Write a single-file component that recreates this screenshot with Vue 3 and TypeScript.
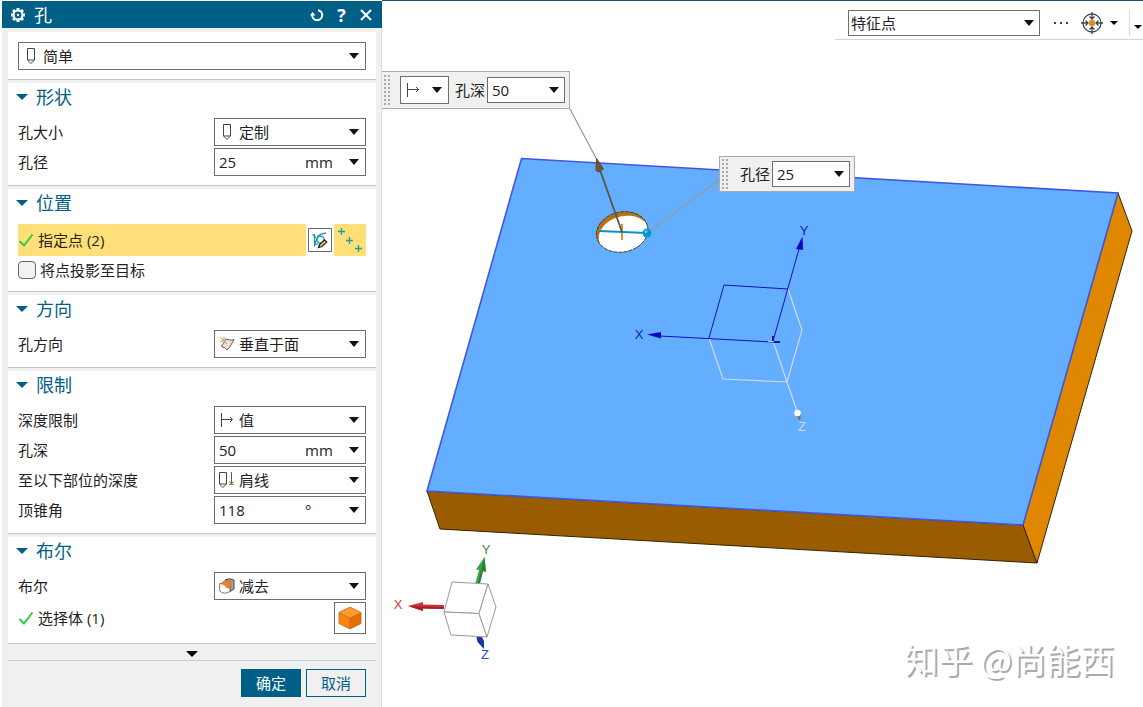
<script setup lang="ts">
import { ref } from 'vue'

const holeType = ref('简单')
const holeSize = ref('定制')
const diameter = ref('25')
const depth = ref('50')
const tipAngle = ref('118')
const direction = ref('垂直于面')
const depthLimit = ref('值')
const depthTo = ref('肩线')
const booleanOp = ref('减去')
const snapFilter = ref('特征点')
const project = ref(false)
</script>

<template>
  <div class="app">
    <aside class="dialog">
      <header class="titlebar">
        <svg class="gear" width="16" height="16" viewBox="0 0 16 16">
          <g fill="#fff">
            <rect v-for="a in 4" :key="a" x="6.5" y="1" width="3" height="14" :transform="`rotate(${a * 45} 8 8)`" />
            <circle cx="8" cy="8" r="5.5" />
          </g>
          <circle cx="8" cy="8" r="3.4" fill="#005f87" />
          <circle cx="8" cy="8" r="1.2" fill="#fff" />
        </svg>
        <h1>孔</h1>
        <button class="tool" aria-label="重置">
          <svg width="16" height="16" viewBox="0 0 16 16" fill="none" stroke="#fff" stroke-width="2">
            <path d="M9 3.2A5 5 0 1 1 3.2 8" /><path d="M1 8.5 3.5 5 6.5 8.5Z" fill="#fff" stroke="none" />
          </svg>
        </button>
        <button class="tool help" aria-label="帮助">?</button>
        <button class="tool" aria-label="关闭">
          <svg width="16" height="16" viewBox="0 0 16 16" stroke="#fff" stroke-width="2"><path d="M3 3 13 13M13 3 3 13" /></svg>
        </button>
      </header>

      <div class="body">
        <section class="panel first">
          <div class="combo wide">
            <svg class="ico" width="16" height="16" viewBox="0 0 16 16" fill="none" stroke="#444"><path d="M4.5 .5h7v11.500l-3.500 3.500-3.500-3.500zM5 12h6" /></svg>
            <select v-model="holeType" aria-label="孔类型"><option>简单</option></select>
            <svg class="caret" width="10" height="6" viewBox="0 0 10 6"><path d="M0 0h10L5 6z" /></svg>
          </div>
        </section>

        <section class="panel">
          <h2><svg class="fold" width="12" height="6" viewBox="0 0 12 6"><path d="M0 0h12L6 6z" /></svg>形状</h2>
          <div class="row">
            <label for="size">孔大小</label>
            <div class="combo">
              <svg class="ico" width="16" height="16" viewBox="0 0 16 16" fill="none" stroke="#444"><path d="M4.500 .500h7v11.500l-3.500 3.500-3.500-3.500zM5 12h6" /></svg>
              <select id="size" v-model="holeSize"><option>定制</option></select>
              <svg class="caret" width="10" height="6" viewBox="0 0 10 6"><path d="M0 0h10L5 6z" /></svg>
            </div>
          </div>
          <div class="row">
            <label for="dia">孔径</label>
            <div class="combo num">
              <input id="dia" v-model="diameter" type="text" />
              <select aria-label="孔径单位"><option>mm</option></select>
              <svg class="caret" width="10" height="6" viewBox="0 0 10 6"><path d="M0 0h10L5 6z" /></svg>
            </div>
          </div>
        </section>

        <section class="panel">
          <h2><svg class="fold" width="12" height="6" viewBox="0 0 12 6"><path d="M0 0h12L6 6z" /></svg>位置</h2>
          <div class="row pick">
            <button class="selection active">
              <svg width="16" height="16" viewBox="0 0 16 16" fill="none" stroke="#35c845" stroke-width="2"><path d="M1.500 9 6 13.500 14.500 2.500" /></svg>
              指定点 (2)
            </button>
            <button class="sketch" aria-label="绘制截面">
              <svg width="20" height="20" viewBox="0 0 20 20" fill="none">
                <path d="M4.500 4v12.500M2.500 4.500 6 8M4.500 15 8 6 11 4 16 3M4.500 15l4-1.500" stroke="#2196b4" stroke-width="1.300" />
                <circle cx="10.500" cy="9.500" r="3.500" stroke="#2196b4" stroke-width="1.300" />
                <path d="M8.500 17.500 9.700 14.500 14.500 10 16.700 12 12 16.500Z" fill="#f0d080" stroke="#222" stroke-width="1.300" />
              </svg>
            </button>
            <button class="points" aria-label="点">
              <svg width="32" height="32" viewBox="0 0 32 32" stroke="#1e9c96" stroke-width="1.300"><path d="M4 7.500h7M7.500 4v7M12 16.500h7M15.500 13v7M21 24.500h7M24.500 21v7" /></svg>
            </button>
          </div>
          <div class="row check">
            <input id="project" v-model="project" type="checkbox" />
            <label for="project">将点投影至目标</label>
          </div>
        </section>

        <section class="panel">
          <h2><svg class="fold" width="12" height="6" viewBox="0 0 12 6"><path d="M0 0h12L6 6z" /></svg>方向</h2>
          <div class="row">
            <label for="dir">孔方向</label>
            <div class="combo">
              <svg class="ico" width="16" height="16" viewBox="0 0 16 16" fill="none">
                <path d="M2.500 10.500 7 3Q11 5 15 3.500L10.500 11.500Q9 12 8 14Q6 11 2.500 10.500Z" fill="#eee3da" stroke="#66605c" />
                <path d="M8 8 1.500 1.500M1 6 5 4.500 5 1" stroke="#dc8a3a" />
              </svg>
              <select id="dir" v-model="direction"><option>垂直于面</option></select>
              <svg class="caret" width="10" height="6" viewBox="0 0 10 6"><path d="M0 0h10L5 6z" /></svg>
            </div>
          </div>
        </section>

        <section class="panel">
          <h2><svg class="fold" width="12" height="6" viewBox="0 0 12 6"><path d="M0 0h12L6 6z" /></svg>限制</h2>
          <div class="row">
            <label for="limit">深度限制</label>
            <div class="combo">
              <svg class="ico" width="16" height="16" viewBox="0 0 16 16" fill="none" stroke="#444"><path d="M2.500 1v14M3 7.500h10.500M11 5l2.500 2.500L11 10" /></svg>
              <select id="limit" v-model="depthLimit"><option>值</option></select>
              <svg class="caret" width="10" height="6" viewBox="0 0 10 6"><path d="M0 0h10L5 6z" /></svg>
            </div>
          </div>
          <div class="row">
            <label for="depth">孔深</label>
            <div class="combo num">
              <input id="depth" v-model="depth" type="text" />
              <select aria-label="孔深单位"><option>mm</option></select>
              <svg class="caret" width="10" height="6" viewBox="0 0 10 6"><path d="M0 0h10L5 6z" /></svg>
            </div>
          </div>
          <div class="row">
            <label for="depthto">至以下部位的深度</label>
            <div class="combo">
              <svg class="ico" width="16" height="16" viewBox="0 0 16 16" fill="none" stroke="#444"><path d="M.500 .500h7v11.500l-3.500 3.500-3.500-3.500zM1 12h6" /><path d="M12.500 0v12M10.500 9.500l2 2.500 2-2.500" stroke="#6d5a45" /><path d="M10 12.500h5" stroke="#d8843a" /></svg>
              <select id="depthto" v-model="depthTo"><option>肩线</option></select>
              <svg class="caret" width="10" height="6" viewBox="0 0 10 6"><path d="M0 0h10L5 6z" /></svg>
            </div>
          </div>
          <div class="row">
            <label for="angle">顶锥角</label>
            <div class="combo num">
              <input id="angle" v-model="tipAngle" type="text" />
              <select aria-label="角度单位"><option>°</option></select>
              <svg class="caret" width="10" height="6" viewBox="0 0 10 6"><path d="M0 0h10L5 6z" /></svg>
            </div>
          </div>
        </section>

        <section class="panel">
          <h2><svg class="fold" width="12" height="6" viewBox="0 0 12 6"><path d="M0 0h12L6 6z" /></svg>布尔</h2>
          <div class="row">
            <label for="bool">布尔</label>
            <div class="combo">
              <svg class="ico" width="16" height="16" viewBox="0 0 16 16">
                <path d="M6 2Q10-.500 15 2V11L11 13.500V6Z" fill="#a5a5a5" stroke="#444" />
                <path d="M.700 5.500v7.500Q5 17 11 13.500V6Z" fill="#fff" stroke="#777" />
                <path d="M3 4.500Q7 .500 12 3.500V9Q10 11 7.500 9.500Q6.500 6.500 3 6Z" fill="#e8833a" stroke="#b8602a" stroke-width=".600" />
              </svg>
              <select id="bool" v-model="booleanOp"><option>减去</option></select>
              <svg class="caret" width="10" height="6" viewBox="0 0 10 6"><path d="M0 0h10L5 6z" /></svg>
            </div>
          </div>
          <div class="row pick">
            <button class="selection">
              <svg width="16" height="16" viewBox="0 0 16 16" fill="none" stroke="#35c845" stroke-width="2"><path d="M1.500 9 6 13.500 14.500 2.500" /></svg>
              选择体 (1)
            </button>
            <button class="solid" aria-label="体">
              <svg width="24" height="24" viewBox="0 0 24 24">
                <path d="M12 1 23 6.500 12 12 1 6.500Z" fill="#ff9c2b" />
                <path d="M1 6.500 12 12V23L1 17.500Z" fill="#fb8410" />
                <path d="M23 6.500 12 12V23L23 17.500Z" fill="#e36f08" />
                <path d="M12 1 23 6.500V17.500L12 23 1 17.500V6.500ZM1 6.500 12 12 23 6.500M12 12v11" fill="none" stroke="#c96412" stroke-width=".800" />
              </svg>
            </button>
          </div>
        </section>

        <button class="expand" aria-label="展开">
          <svg width="12" height="6" viewBox="0 0 12 6"><path d="M0 0h12L6 6z" /></svg>
        </button>
      </div>

      <footer class="actions">
        <button class="primary">确定</button>
        <button>取消</button>
      </footer>
    </aside>

    <main class="viewport">
      <svg class="scene" viewBox="382 0 761 707" preserveAspectRatio="xMinYMin meet">
        <defs>
          <clipPath id="holeClip"><ellipse cx="622.200" cy="232" rx="26" ry="20" transform="rotate(-12 622.200 232)" /></clipPath>
        </defs>
        <g stroke="#332200" stroke-width="1">
          <path d="M427 491 1023 525 1037 563 440 529Z" fill="#995c00" />
          <path d="M1118 193 1132 231 1037 563 1023 525Z" fill="#e08700" />
        </g>
        <path d="M521.500 158.500 1118 193 1023 525 427 491Z" fill="#63aeff" stroke="#4257dd" stroke-width="1.600" />

        <g clip-path="url(#holeClip)">
          <path d="M590 205h65v55h-65z" fill="#b87210" />
          <ellipse cx="624.500" cy="236" rx="26" ry="20" fill="#fff" transform="rotate(-12 624.500 236)" />
        </g>
        <ellipse cx="622.200" cy="232" rx="26" ry="20" fill="none" stroke="#333" stroke-width=".900" stroke-dasharray="4 1" transform="rotate(-12 622.200 232)" />
        <path d="M570 109 597 160M647 233 719 180" stroke="#999" stroke-width="1.200" />
        <path d="M622 224v16" stroke="#dc9030" stroke-width="2" />
        <path d="M599 231 647 233" stroke="#0b8fc4" stroke-width="2" />
        <path d="M622 232 600 170" stroke="#5e5245" stroke-width="1.800" />
        <path d="M596.500 158.500 603.500 169 599 172 596 170.500Z" fill="#705439" stroke="#5e4930" />
        <circle cx="647" cy="233" r="4.500" fill="#0796d1" />
        <circle cx="646" cy="231.500" r="1.500" fill="#55c8f2" />

        <g fill="none" stroke="#d3d8e0" stroke-width="1.200">
          <path d="M788 289 802 330 787 382 723 379 709 338M773 341 787 382 797 411" />
        </g>
        <g fill="none" stroke="#1111bb" stroke-width="1">
          <path d="M709 338 724 285 788 289M773 341 799 249M772 342 660 336" />
          <path d="M773 336v6M773 342h7" stroke-width="2" />
        </g>
        <path d="M768 341.500h6" stroke="#c9b9f5" />
        <path d="M802.500 236.500 803 250 796 249ZM647 334.500 661 332 661 338.500Z" fill="#0909c4" />
        <path d="M795 414h6l-1 7z" fill="#777" />
        <circle cx="797.500" cy="413" r="3.300" fill="#fff" />
        <g class="axis" text-anchor="middle">
          <text x="639" y="339" fill="#1717b8">X</text>
          <text x="804" y="235" fill="#1717b8">Y</text>
          <text x="802" y="431" fill="#d3d8e0">Z</text>
          <text x="398" y="609" fill="#c43c42">X</text>
          <text x="486" y="554" fill="#3c8a45">Y</text>
          <text x="485" y="659" fill="#2c50c8">Z</text>
        </g>

        <path d="M444 605 423 604.500V602L408 606 423 611V608.500L444 609Z" fill="#cd3339" />
        <path d="M408 606 423 611V608.500L444 609V607Z" fill="#a32228" />
        <path d="M475.500 583 479 570 476 569.500 484.500 557 486 572 483 571 480 583Z" fill="#38a646" />
        <path d="M480 583 483 571 486 572 484.500 557 481 571 478 583Z" fill="#278035" />
        <path d="M476.500 637H482L484 641V649L477.500 642Z" fill="#17389d" />
        <g fill="#fff" stroke="#999" stroke-width="1">
          <path d="M452 582 488 584 479 613.500 444 612Z" />
          <path d="M444 612 479 613.500 487 637 451 635Z" />
          <path d="M488 584 496 607 487 637 479 613.500Z" />
        </g>
      </svg>

      <div class="topbar">
        <div class="combo filter">
          <select v-model="snapFilter" aria-label="选择过滤器"><option>特征点</option></select>
          <svg class="caret" width="10" height="6" viewBox="0 0 10 6"><path d="M0 0h10L5 6z" /></svg>
        </div>
        <button aria-label="更多"><svg width="16" height="4" viewBox="0 0 16 4"><path d="M1 1h2v2H1zM7 1h2v2H7zM13 1h2v2h-2z" fill="#444" /></svg></button>
        <button class="target" aria-label="捕捉点">
          <svg width="24" height="24" viewBox="0 0 24 24" fill="none" stroke="#3c4a50" stroke-width="1.300">
            <circle cx="12" cy="12" r="9" />
            <path d="M12 1v7M12 23v-7M1 12h7M23 12h-7M9.500 5.500 12 8l2.500-2.500M9.500 18.500 12 16l2.500 2.500M5.500 9.500 8 12l-2.500 2.500M18.500 9.500 16 12l2.500 2.500" />
            <circle cx="12" cy="12" r="3.200" fill="#e88a1c" stroke="none" />
          </svg>
          <svg width="8" height="4" viewBox="0 0 8 4"><path d="M0 0h8L4 4z" /></svg>
        </button>
        <button class="overflow" aria-label="工具条选项"><svg width="8" height="4" viewBox="0 0 8 4"><path d="M0 0h8L4 4z" /></svg></button>
      </div>

      <div class="floatbar depthbar">
        <i class="grip"></i>
        <div class="combo mode">
          <svg class="ico" width="16" height="16" viewBox="0 0 16 16" fill="none" stroke="#444"><path d="M2.500 1v14M3 7.500h10.500M11 5l2.500 2.500L11 10" /></svg>
          <select aria-label="深度限制方式"><option label=" ">值</option></select>
          <svg class="caret" width="10" height="6" viewBox="0 0 10 6"><path d="M0 0h10L5 6z" /></svg>
        </div>
        <label for="fdepth">孔深</label>
        <div class="combo value">
          <input id="fdepth" v-model="depth" type="text" />
          <svg class="caret" width="10" height="6" viewBox="0 0 10 6"><path d="M0 0h10L5 6z" /></svg>
        </div>
      </div>

      <div class="floatbar diabar">
        <i class="grip"></i>
        <label for="fdia">孔径</label>
        <div class="combo value">
          <input id="fdia" v-model="diameter" type="text" />
          <svg class="caret" width="10" height="6" viewBox="0 0 10 6"><path d="M0 0h10L5 6z" /></svg>
        </div>
      </div>

      <div class="watermark">知乎 @尚能西</div>
    </main>
  </div>
</template>

<style>
body {
  margin: 0;
  background: #fff;
}
</style>

<style scoped>
* {
  box-sizing: border-box;
}
.app {
  display: flex;
  min-height: 100vh;
  padding-left: 2px;
  font: 15px/20px "Open Sans", "Noto Sans CJK SC", sans-serif;
  color: #222;
}
button,
input,
select {
  font: inherit;
  color: inherit;
  margin: 0;
  padding: 0;
  border: 0;
  border-radius: 0;
  background: none;
}
svg {
  display: block;
  flex: none;
}
.dialog {
  flex: 0 0 380px;
  display: flex;
  flex-direction: column;
  background: #f0f0f0;
  border-right: 1px solid #dcdcdc;
}
.titlebar {
  display: flex;
  align-items: center;
  height: 28px;
  padding: 0 4px 0 8px;
  border-top: 1px solid #fff;
  margin-right: -1px;
  background: #005f87;
  color: #fff;
}
.titlebar h1 {
  flex: 1;
  margin: 0 0 0 8px;
  font-size: 18px;
  line-height: 26px;
  font-weight: 400;
}
.tool {
  display: flex;
  justify-content: center;
  width: 24px;
}
.help {
  width: 25px;
  font-size: 18px;
  font-weight: 700;
}
.body {
  display: flex;
  flex-direction: column;
  gap: 3px;
  padding: 4px 5px 0 6px;
}
.panel {
  display: flex;
  flex-direction: column;
  gap: 2px;
  padding: 0 10px 9px;
  background: #fff;
  border-bottom: 1px solid #c6c6c6;
}
.first {
  padding-top: 10px;
}
h2 {
  display: flex;
  align-items: center;
  gap: 8px;
  height: 28px;
  margin: 0 0 5px -2px;
  font-size: 18px;
  font-weight: 400;
  line-height: 28px;
  color: #005f87;
}
.fold {
  fill: #005f87;
}
.row {
  display: flex;
  align-items: center;
  justify-content: space-between;
}
.combo {
  position: relative;
  display: flex;
  align-items: center;
  width: 152px;
  height: 28px;
  border: 1px solid #6e6e6e;
  background: #fff;
}
.combo select {
  flex: 1;
  min-width: 0;
  height: 100%;
  padding: 0 24px;
  appearance: none;
}
.combo input {
  width: 86px;
  height: 100%;
  padding: 0 0 0 4px;
}
.combo .caret {
  position: absolute;
  right: 6px;
  pointer-events: none;
  fill: #111;
}
.combo .ico {
  position: absolute;
  left: 4px;
  pointer-events: none;
}
.combo.wide {
  width: 100%;
}
.num select {
  padding: 0 0 0 4px;
}
.pick {
  gap: 2px;
  height: 32px;
}
.selection {
  display: flex;
  flex: 1;
  align-items: center;
  gap: 4px;
  height: 32px;
}
.active,
.points {
  background: #ffe078;
}
.sketch {
  display: flex;
  align-items: center;
  justify-content: center;
  width: 24px;
  height: 24px;
  border: 1px solid #6e6e6e;
  background: #fff;
}
.solid {
  display: flex;
  align-items: center;
  justify-content: center;
  width: 32px;
  height: 32px;
  border: 1px solid #6e6e6e;
}
.check {
  justify-content: flex-start;
  gap: 4px;
  height: 24px;
}
.check input {
  appearance: none;
  width: 18px;
  height: 18px;
  border: 1px solid #666;
  border-radius: 4px;
  background: #f3f3f3;
}
.expand {
  display: flex;
  align-items: center;
  justify-content: center;
  height: 17px;
  margin-top: -3px;
  padding-top: 3px;
  border-bottom: 1px solid #c6ccd0;
}
.actions {
  display: flex;
  justify-content: flex-end;
  gap: 5px;
  padding: 8px 15px 10px;
}
.actions button {
  width: 60px;
  height: 28px;
  border: 1px solid #005f87;
  color: #005f87;
}
.actions .primary {
  background: #005f87;
  color: #fff;
}
.viewport {
  position: relative;
  flex: 1;
  min-width: 0;
  border-top: 1px solid #24506e;
}
.scene {
  position: absolute;
  top: -1px;
  left: 0;
  width: 100%;
}
.axis {
  font: 13px "Liberation Sans", sans-serif;
}
.topbar {
  position: relative;
  display: flex;
  align-items: center;
  width: 308px;
  height: 39px;
  margin-left: auto;
  padding: 6px 0 0 13px;
  border-bottom: 1px solid #d4d4d4;
}
.combo.filter {
  width: 192px;
  height: 26px;
  margin-right: 13px;
}
.filter select {
  padding: 0 20px 0 2px;
}
.filter .caret {
  right: 5px;
}
.target {
  display: flex;
  align-items: center;
  gap: 6px;
  margin-left: 11px;
}
.overflow {
  height: 26px;
  margin-left: 11px;
  padding: 8px 0 0 4px;
  border-left: 1px solid #ddd;
}
.floatbar {
  position: absolute;
  display: flex;
  align-items: center;
  background: #f0f0f0;
  border: 1px solid #aaa;
}
.depthbar {
  top: 70px;
  left: 0;
  height: 38px;
  padding: 0 4px 0 2px;
  border-left: 0;
}
.diabar {
  top: 155px;
  left: 337px;
  height: 36px;
  padding: 0 4px 0 2px;
}
.grip {
  width: 8px;
  height: 30px;
  margin-right: 8px;
  background: radial-gradient(circle at 1px 1px, #aaa 1px, transparent 1px) 0 0 / 4px 4px;
}
.diabar .grip {
  margin-right: 10px;
}
.combo.mode {
  width: 49px;
  margin-right: 6px;
}
.combo.value {
  width: 78px;
  height: 26px;
  margin-left: 2px;
}
.value input {
  width: 100%;
}
.value .caret {
  right: 5px;
}
.watermark {
  position: absolute;
  right: 29px;
  bottom: 25px;
  font: 400 34px/46px "Noto Sans CJK SC", sans-serif;
  color: #fff;
  text-shadow: 2px 2px 0 #aaa;
}
</style>
